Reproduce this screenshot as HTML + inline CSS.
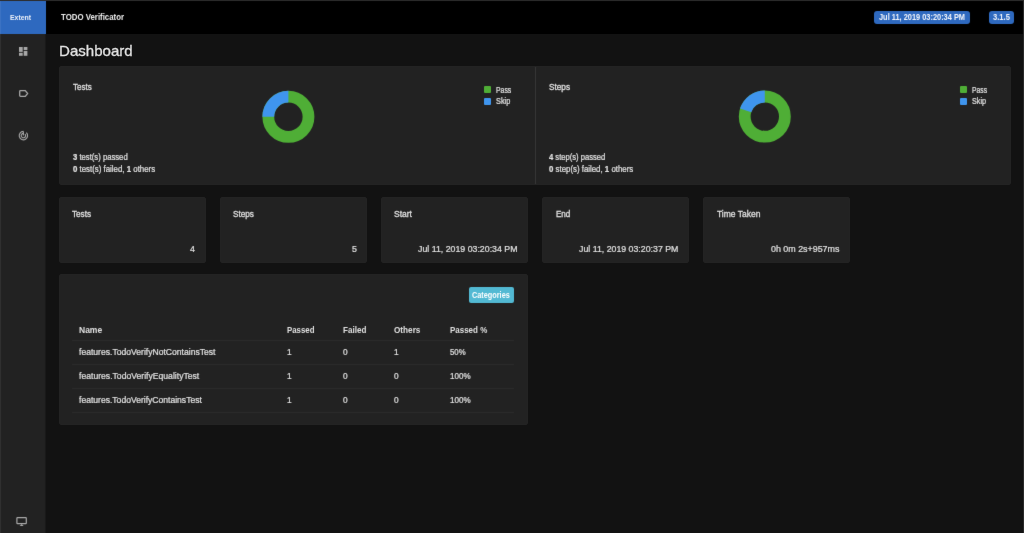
<!DOCTYPE html>
<html><head><meta charset="utf-8">
<style>
*{margin:0;padding:0;box-sizing:border-box}
html,body{width:1024px;height:533px;overflow:hidden;background:#121212;font-family:"Liberation Sans",sans-serif;color:#dddddd}
.a{position:absolute}
.t{position:absolute;white-space:nowrap;transform-origin:0 0}
.n{-webkit-text-stroke:0.0px currentColor}
#w{position:absolute;left:0;top:0;width:1024px;height:533px;filter:url(#soft)}
.card{position:absolute;background:#222222;border:1px solid #262626;border-radius:2px}
.badge{position:absolute;background:#2e69bf;border-radius:3px}
.sq{position:absolute;width:7px;height:7px;border-radius:1px}
.line{position:absolute;height:1px;background:#2a2a2a}
</style></head><body><svg width="0" height="0" style="position:absolute"><filter id="soft" x="0" y="0" width="100%" height="100%" color-interpolation-filters="sRGB"><feConvolveMatrix order="3" kernelMatrix="0.00524 0.06192 0.00524 0.06192 0.73137 0.06192 0.00524 0.06192 0.00524" edgeMode="duplicate" preserveAlpha="true"/></filter></svg><div id="w">
<div class="a" style="left:0;top:0;width:1024px;height:1px;background:#2c2c2c"></div>
<div class="a" style="left:0;top:1px;width:1023px;height:32.5px;background:#000000"></div>
<div class="a" style="left:0;top:1px;width:46px;height:32.5px;background:#2e69bf"></div>
<div class="a" style="left:0;top:33.5px;width:45px;height:499.5px;background:#222222"></div>
<div class="a" style="left:45px;top:33.5px;width:1px;height:499.5px;background:#1a1a1a"></div>
<div class="a" style="left:1023px;top:0;width:1px;height:533px;background:#2c2c2c"></div>
<div class="a" style="left:0;top:1px;width:1px;height:532px;background:rgba(255,255,255,0.07)"></div>

<svg class="a" style="left:0;top:34px" width="45" height="499" viewBox="0 34 45 499">
 <g fill="#a8a8a8">
  <rect x="19" y="47" width="3.7" height="4.9"/><rect x="19" y="52.8" width="3.7" height="3"/>
  <rect x="23.7" y="47" width="3.7" height="3"/><rect x="23.7" y="50.9" width="3.7" height="4.9"/>
 </g>
 <path d="M20.5 90.7 H25.3 L27.6 93.5 L25.3 96.3 H20.5 Q19.7 96.3 19.7 95.5 V91.5 Q19.7 90.7 20.5 90.7 Z" fill="none" stroke="#a8a8a8" stroke-width="1.3"/>
 <g fill="none" stroke="#a8a8a8" stroke-width="1.1">
  <path d="M26.37 132.63 A4.2 4.2 0 1 1 23.4 131.4"/>
  <path d="M24.96 134.04 A2.2 2.2 0 1 1 23.4 133.4"/>
  <path d="M23.4 135.6 V131.4"/>
 </g>
 <path d="M17.5 517.6 H25.7 Q26.3 517.6 26.3 518.2 V523.1 Q26.3 523.7 25.7 523.7 H17.5 Q16.9 523.7 16.9 523.1 V518.2 Q16.9 517.6 17.5 517.6 Z" fill="none" stroke="#a8a8a8" stroke-width="1.2"/>
 <path d="M21.6 524 L23.6 525.9 L19.6 525.9 Z" fill="#a8a8a8"/>
</svg>

<div class="badge" style="left:874px;top:10.6px;width:95.6px;height:13.8px"></div>
<div class="badge" style="left:989px;top:10.6px;width:25px;height:13.8px"></div>

<div class="card" style="left:59px;top:66px;width:952px;height:119px"></div>
<div class="a" style="left:535px;top:67px;width:1px;height:117px;background:#363636"></div>
<div class="sq" style="left:484px;top:86px;background:#4fae36"></div>
<div class="sq" style="left:484px;top:98px;background:#3f95ee"></div>
<div class="sq" style="left:960px;top:86px;background:#4fae36"></div>
<div class="sq" style="left:960px;top:98px;background:#3f95ee"></div>
<svg class="a" style="left:0;top:0" width="1024" height="200">
<circle cx="288.4" cy="116.8" r="20.1" fill="none" stroke="#4fae36" stroke-width="11.8"/><path d="M288.4 90.8 A26 26 0 0 0 262.400 116.800 L274.200 116.800 A14.2 14.2 0 0 1 288.4 102.6 Z" fill="#3f95ee"/>
<circle cx="764.8" cy="116.6" r="20.1" fill="none" stroke="#4fae36" stroke-width="11.8"/><path d="M764.8 90.6 A26 26 0 0 0 740.073 108.566 L751.295 112.212 A14.2 14.2 0 0 1 764.8 102.39999999999999 Z" fill="#3f95ee"/>
</svg>

<div class="card" style="left:59px;top:197px;width:146.5px;height:66px"></div>
<div class="card" style="left:220px;top:197px;width:146.5px;height:66px"></div>
<div class="card" style="left:381px;top:197px;width:146.5px;height:66px"></div>
<div class="card" style="left:542px;top:197px;width:146.5px;height:66px"></div>
<div class="card" style="left:703px;top:197px;width:146.5px;height:66px"></div>

<div class="card" style="left:59px;top:274px;width:468.5px;height:151px"></div>
<div class="a" style="left:469px;top:287px;width:45px;height:16px;background:#52b9d3;border-radius:2px"></div>
<div class="line" style="left:72px;top:340px;width:442px"></div>
<div class="line" style="left:72px;top:364px;width:442px"></div>
<div class="line" style="left:72px;top:388px;width:442px"></div>
<div class="line" style="left:72px;top:412px;width:442px"></div>

<div class="t" style="left:9.63px;top:13.52px;font-size:8.00px;line-height:8.00px;font-weight:bold;color:#eef2fa;transform:scaleX(0.863);-webkit-text-stroke:0px currentColor">Extent</div>
<div class="t" style="left:60.93px;top:12.18px;font-size:9.80px;line-height:9.80px;font-weight:bold;color:#eeeeee;transform:scaleX(0.800);-webkit-text-stroke:0px currentColor">TODO Verificator</div>
<div class="t" style="left:878.67px;top:14.32px;font-size:8.20px;line-height:8.20px;font-weight:bold;color:#f2f5fb;transform:scaleX(0.904);-webkit-text-stroke:0px currentColor">Jul 11, 2019 03:20:34 PM</div>
<div class="t" style="left:992.63px;top:14.32px;font-size:8.20px;line-height:8.20px;font-weight:bold;color:#f2f5fb;transform:scaleX(0.929);-webkit-text-stroke:0px currentColor">3.1.5</div>
<div class="t" style="left:58.65px;top:42.83px;font-size:15.41px;line-height:15.41px;color:#e2e2e2;transform:scaleX(0.978);-webkit-text-stroke:0.35px currentColor">Dashboard</div>
<div class="t" style="left:72.73px;top:83.42px;font-size:8.82px;line-height:8.82px;color:#e2e2e2;transform:scaleX(0.906);-webkit-text-stroke:0.3px currentColor">Tests</div>
<div class="t" style="left:72.51px;top:153.14px;font-size:8.30px;line-height:8.30px;color:#e2e2e2;transform:scaleX(0.926);-webkit-text-stroke:0.22px currentColor"><b>3</b> test(s) passed</div>
<div class="t" style="left:72.92px;top:165.28px;font-size:8.30px;line-height:8.30px;color:#e2e2e2;transform:scaleX(0.947);-webkit-text-stroke:0.22px currentColor"><b>0</b> test(s) failed, <b>1</b> others</div>
<div class="t" style="left:495.63px;top:85.96px;font-size:8.50px;line-height:8.50px;color:#e2e2e2;transform:scaleX(0.808);-webkit-text-stroke:0.22px currentColor">Pass</div>
<div class="t" style="left:495.54px;top:97.28px;font-size:8.50px;line-height:8.50px;color:#e2e2e2;transform:scaleX(0.863);-webkit-text-stroke:0.22px currentColor">Skip</div>
<div class="t" style="left:548.66px;top:83.26px;font-size:8.82px;line-height:8.82px;color:#e2e2e2;transform:scaleX(0.932);-webkit-text-stroke:0.3px currentColor">Steps</div>
<div class="t" style="left:548.74px;top:153.14px;font-size:8.30px;line-height:8.30px;color:#e2e2e2;transform:scaleX(0.916);-webkit-text-stroke:0.22px currentColor"><b>4</b> step(s) passed</div>
<div class="t" style="left:548.63px;top:165.28px;font-size:8.30px;line-height:8.30px;color:#e2e2e2;transform:scaleX(0.946);-webkit-text-stroke:0.22px currentColor"><b>0</b> step(s) failed, <b>1</b> others</div>
<div class="t" style="left:971.67px;top:85.98px;font-size:8.50px;line-height:8.50px;color:#e2e2e2;transform:scaleX(0.795);-webkit-text-stroke:0.22px currentColor">Pass</div>
<div class="t" style="left:971.59px;top:97.28px;font-size:8.50px;line-height:8.50px;color:#e2e2e2;transform:scaleX(0.849);-webkit-text-stroke:0.22px currentColor">Skip</div>
<div class="t" style="left:72.31px;top:209.60px;font-size:8.82px;line-height:8.82px;color:#e2e2e2;transform:scaleX(0.922);-webkit-text-stroke:0.3px currentColor">Tests</div>
<div class="t" style="left:232.62px;top:209.60px;font-size:8.82px;line-height:8.82px;color:#e2e2e2;transform:scaleX(0.925);-webkit-text-stroke:0.3px currentColor">Steps</div>
<div class="t" style="left:394.29px;top:209.60px;font-size:8.82px;line-height:8.82px;color:#e2e2e2;transform:scaleX(0.962);-webkit-text-stroke:0.3px currentColor">Start</div>
<div class="t" style="left:555.73px;top:209.60px;font-size:8.82px;line-height:8.82px;color:#e2e2e2;transform:scaleX(0.913);-webkit-text-stroke:0.3px currentColor">End</div>
<div class="t" style="left:716.75px;top:209.60px;font-size:8.82px;line-height:8.82px;color:#e2e2e2;transform:scaleX(0.962);-webkit-text-stroke:0.3px currentColor">Time Taken</div>
<div class="t" style="left:190.05px;top:245.42px;font-size:9.01px;line-height:9.01px;color:#e2e2e2;transform:scaleX(0.979);-webkit-text-stroke:0.22px currentColor">4</div>
<div class="t" style="left:351.59px;top:245.42px;font-size:9.01px;line-height:9.01px;color:#e2e2e2;transform:scaleX(0.979);-webkit-text-stroke:0.22px currentColor">5</div>
<div class="t" style="left:417.74px;top:245.42px;font-size:9.01px;line-height:9.01px;color:#e2e2e2;transform:scaleX(0.976);-webkit-text-stroke:0.22px currentColor">Jul 11, 2019 03:20:34 PM</div>
<div class="t" style="left:578.53px;top:245.42px;font-size:9.01px;line-height:9.01px;color:#e2e2e2;transform:scaleX(0.975);-webkit-text-stroke:0.22px currentColor">Jul 11, 2019 03:20:37 PM</div>
<div class="t" style="left:770.62px;top:245.42px;font-size:9.01px;line-height:9.01px;color:#e2e2e2;transform:scaleX(0.987);-webkit-text-stroke:0.22px currentColor">0h 0m 2s+957ms</div>
<div class="t" style="left:471.86px;top:290.87px;font-size:8.30px;line-height:8.30px;font-weight:bold;color:#ffffff;transform:scaleX(0.881);-webkit-text-stroke:0px currentColor">Categories</div>
<div class="t" style="left:78.70px;top:326.13px;font-size:8.58px;line-height:8.58px;font-weight:bold;color:#e2e2e2;transform:scaleX(0.991);-webkit-text-stroke:0px currentColor">Name</div>
<div class="t" style="left:286.74px;top:326.13px;font-size:8.58px;line-height:8.58px;font-weight:bold;color:#e2e2e2;transform:scaleX(0.916);-webkit-text-stroke:0px currentColor">Passed</div>
<div class="t" style="left:342.69px;top:326.13px;font-size:8.58px;line-height:8.58px;font-weight:bold;color:#e2e2e2;transform:scaleX(0.941);-webkit-text-stroke:0px currentColor">Failed</div>
<div class="t" style="left:393.82px;top:326.13px;font-size:8.58px;line-height:8.58px;font-weight:bold;color:#e2e2e2;transform:scaleX(0.954);-webkit-text-stroke:0px currentColor">Others</div>
<div class="t" style="left:449.61px;top:326.13px;font-size:8.58px;line-height:8.58px;font-weight:bold;color:#e2e2e2;transform:scaleX(0.929);-webkit-text-stroke:0px currentColor">Passed %</div>
<div class="t" style="left:78.59px;top:347.95px;font-size:8.82px;line-height:8.82px;color:#e2e2e2;transform:scaleX(0.974);-webkit-text-stroke:0.22px currentColor">features.TodoVerifyNotContainsTest</div>
<div class="t" style="left:78.59px;top:372.37px;font-size:8.82px;line-height:8.82px;color:#e2e2e2;transform:scaleX(0.978);-webkit-text-stroke:0.22px currentColor">features.TodoVerifyEqualityTest</div>
<div class="t" style="left:78.59px;top:396.15px;font-size:8.82px;line-height:8.82px;color:#e2e2e2;transform:scaleX(0.972);-webkit-text-stroke:0.22px currentColor">features.TodoVerifyContainsTest</div>
<div class="t" style="left:286.58px;top:347.95px;font-size:8.82px;line-height:8.82px;color:#e2e2e2;transform:scaleX(0.939);-webkit-text-stroke:0.22px currentColor">1</div>
<div class="t" style="left:342.73px;top:347.95px;font-size:8.82px;line-height:8.82px;color:#e2e2e2;transform:scaleX(0.939);-webkit-text-stroke:0.22px currentColor">0</div>
<div class="t" style="left:393.74px;top:347.95px;font-size:8.82px;line-height:8.82px;color:#e2e2e2;transform:scaleX(0.939);-webkit-text-stroke:0.22px currentColor">1</div>
<div class="t" style="left:449.56px;top:347.95px;font-size:8.82px;line-height:8.82px;color:#e2e2e2;transform:scaleX(0.885);-webkit-text-stroke:0.22px currentColor">50%</div>
<div class="t" style="left:286.50px;top:372.37px;font-size:8.82px;line-height:8.82px;color:#e2e2e2;transform:scaleX(0.939);-webkit-text-stroke:0.22px currentColor">1</div>
<div class="t" style="left:342.73px;top:372.37px;font-size:8.82px;line-height:8.82px;color:#e2e2e2;transform:scaleX(0.939);-webkit-text-stroke:0.22px currentColor">0</div>
<div class="t" style="left:393.70px;top:372.37px;font-size:8.82px;line-height:8.82px;color:#e2e2e2;transform:scaleX(0.939);-webkit-text-stroke:0.22px currentColor">0</div>
<div class="t" style="left:449.55px;top:372.37px;font-size:8.82px;line-height:8.82px;color:#e2e2e2;transform:scaleX(0.912);-webkit-text-stroke:0.22px currentColor">100%</div>
<div class="t" style="left:286.58px;top:396.15px;font-size:8.82px;line-height:8.82px;color:#e2e2e2;transform:scaleX(0.939);-webkit-text-stroke:0.22px currentColor">1</div>
<div class="t" style="left:342.73px;top:396.15px;font-size:8.82px;line-height:8.82px;color:#e2e2e2;transform:scaleX(0.939);-webkit-text-stroke:0.22px currentColor">0</div>
<div class="t" style="left:393.70px;top:396.15px;font-size:8.82px;line-height:8.82px;color:#e2e2e2;transform:scaleX(0.939);-webkit-text-stroke:0.22px currentColor">0</div>
<div class="t" style="left:449.58px;top:396.15px;font-size:8.82px;line-height:8.82px;color:#e2e2e2;transform:scaleX(0.914);-webkit-text-stroke:0.22px currentColor">100%</div>
</div></body></html>
